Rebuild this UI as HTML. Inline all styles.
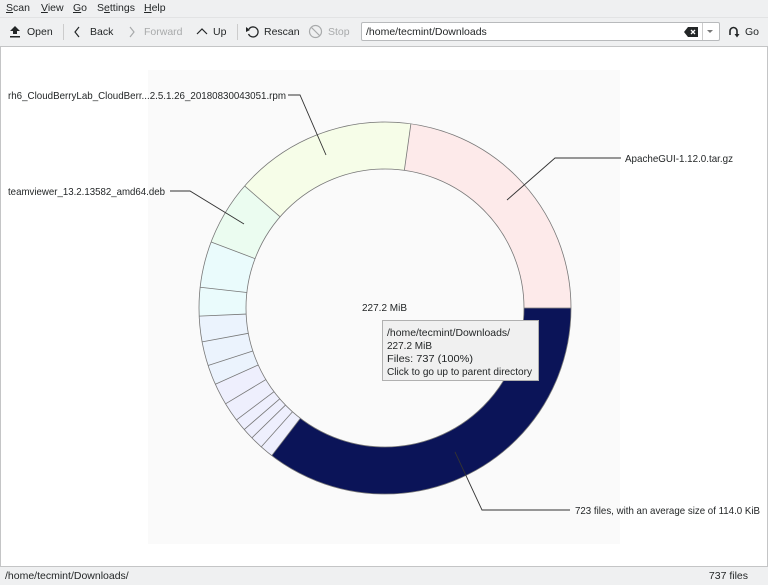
<!DOCTYPE html>
<html><head><meta charset="utf-8"><style>
*{margin:0;padding:0;box-sizing:border-box}
body{width:768px;height:585px;overflow:hidden;background:#eff0f1;font-family:"Liberation Sans","DejaVu Sans",sans-serif;font-size:11px;color:#232627;position:relative}
.menu{position:absolute;top:0;left:0;right:0;height:17px;background:#eff0f1}
.menu span{position:absolute;top:2px;font-size:10.5px}
.tb{position:absolute;top:17px;left:0;right:0;height:28px;background:#eff0f1;border-top:1px solid #e2e3e4}
.tb span{position:absolute;top:8px;font-size:10.5px}
.dis{color:#a8aaab}
.url{position:absolute;left:361px;top:22px;width:359px;height:19px;background:#fff;border:1px solid #b8babc;border-radius:2px}
.main{position:absolute;left:0;top:46px;width:768px;height:521px;background:#fff;border:1px solid #c4c5c6}
.status{position:absolute;top:567px;left:0;right:0;height:18px;background:#eff0f1}
</style></head><body>
<div class="menu"><span style="left:6px"><u>S</u>can</span><span style="left:41px"><u>V</u>iew</span><span style="left:73px"><u>G</u>o</span><span style="left:97px">S<u>e</u>ttings</span><span style="left:144px"><u>H</u>elp</span></div>
<div class="tb">
<svg style="position:absolute;left:9px;top:7px" width="12" height="13"><path d="M6 1 L11 6 H8 V9 H4 V6 H1Z M1 11 H11 V12.5 H1Z" fill="#232627"/></svg>
<span style="left:27px">Open</span>
<div style="position:absolute;left:63px;top:6px;width:1px;height:16px;background:#ccc"></div>
<svg style="position:absolute;left:72px;top:7px" width="10" height="14"><path d="M7 2 L3 7 L7 12" stroke="#232627" fill="none" stroke-width="1.2"/></svg>
<span style="left:90px">Back</span>
<svg style="position:absolute;left:127px;top:7px" width="10" height="14"><path d="M3 2 L7 7 L3 12" stroke="#a8aaab" fill="none" stroke-width="1.2"/></svg>
<span class="dis" style="left:144px">Forward</span>
<svg style="position:absolute;left:195px;top:7px" width="14" height="14"><path d="M2 9 L7 4 L12 9" stroke="#232627" fill="none" stroke-width="1.2"/></svg>
<span style="left:213px">Up</span>
<div style="position:absolute;left:237px;top:6px;width:1px;height:16px;background:#ccc"></div>
<svg style="position:absolute;left:245px;top:6px" width="15" height="15"><path d="M4 5 A5 5 0 1 1 3.5 10" stroke="#232627" fill="none" stroke-width="1.3"/><path d="M1 3 L5 6 L1 8Z" fill="#232627"/></svg>
<span style="left:264px">Rescan</span>
<svg style="position:absolute;left:308px;top:6px" width="15" height="15"><circle cx="7.5" cy="7.5" r="6" stroke="#a8aaab" fill="none" stroke-width="1.2"/><path d="M3.5 3.5 L11.5 11.5" stroke="#a8aaab" stroke-width="1.2"/></svg>
<span class="dis" style="left:328px">Stop</span>
</div>
<div class="url"><span style="position:absolute;left:4px;top:3px;font-size:10.5px">/home/tecmint/Downloads</span>
<svg style="position:absolute;left:322px;top:4px" width="14" height="10"><path d="M4 0 H14 V10 H4 L0 5Z" fill="#232627"/><path d="M7 3 L11 7 M11 3 L7 7" stroke="#fff" stroke-width="1.3"/></svg>
<div style="position:absolute;left:340px;top:0;width:1px;height:17px;background:#ccc"></div>
<svg style="position:absolute;left:345px;top:7px" width="7" height="4"><path d="M0 0 H6 L3 3Z" fill="#777"/></svg>
</div>
<svg style="position:absolute;left:728px;top:25px" width="12" height="14"><path d="M2 10 V6 A3.5 3.5 0 0 1 9 6 V10" stroke="#232627" fill="none" stroke-width="1.6"/><path d="M6.5 9 H11.5 L9 12.5Z" fill="#232627"/></svg>
<span style="position:absolute;left:745px;top:26px;font-size:10.5px">Go</span>
<div class="main"></div>
<svg style="position:absolute;left:0;top:0" width="768" height="585">
<rect x="148" y="70" width="472" height="474" fill="#fafafa"/>
<g fill="none" stroke-width="47">
<circle cx="385" cy="308" r="162.5" stroke="#0b1458" stroke-dasharray="361.6 2000" transform="rotate(0 385 308)"/>
<circle cx="385" cy="308" r="162.5" stroke="#eeeffd" stroke-dasharray="210 2000" transform="rotate(127.5 385 308)"/>
<circle cx="385" cy="308" r="162.5" stroke="#ebf3fd" stroke-dasharray="80 2000" transform="rotate(155.8 385 308)"/>
<circle cx="385" cy="308" r="162.5" stroke="#eafbfc" stroke-dasharray="70 2000" transform="rotate(177.5 385 308)"/>
<circle cx="385" cy="308" r="162.5" stroke="#ebfcf0" stroke-dasharray="57.3 2000" transform="rotate(200.8 385 308)"/>
<circle cx="385" cy="308" r="162.5" stroke="#f6fde8" stroke-dasharray="161.7 2000" transform="rotate(221 385 308)"/>
<circle cx="385" cy="308" r="162.5" stroke="#fdeaea" stroke-dasharray="232.6 2000" transform="rotate(278 385 308)"/>
</g>
<g stroke="#777" stroke-width="0.8" fill="none">
<circle cx="385" cy="308" r="186"/><circle cx="385" cy="308" r="139"/>
<g>
<line x1="524" y1="308" x2="571" y2="308"/>
<line x1="524" y1="308" x2="571" y2="308" transform="rotate(127.5 385 308)"/>
<line x1="524" y1="308" x2="571" y2="308" transform="rotate(131.7 385 308)"/>
<line x1="524" y1="308" x2="571" y2="308" transform="rotate(135.7 385 308)"/>
<line x1="524" y1="308" x2="571" y2="308" transform="rotate(139.2 385 308)"/>
<line x1="524" y1="308" x2="571" y2="308" transform="rotate(143 385 308)"/>
<line x1="524" y1="308" x2="571" y2="308" transform="rotate(149 385 308)"/>
<line x1="524" y1="308" x2="571" y2="308" transform="rotate(155.8 385 308)"/>
<line x1="524" y1="308" x2="571" y2="308" transform="rotate(162 385 308)"/>
<line x1="524" y1="308" x2="571" y2="308" transform="rotate(169.5 385 308)"/>
<line x1="524" y1="308" x2="571" y2="308" transform="rotate(177.5 385 308)"/>
<line x1="524" y1="308" x2="571" y2="308" transform="rotate(186.4 385 308)"/>
<line x1="524" y1="308" x2="571" y2="308" transform="rotate(200.8 385 308)"/>
<line x1="524" y1="308" x2="571" y2="308" transform="rotate(221 385 308)"/>
<line x1="524" y1="308" x2="571" y2="308" transform="rotate(278 385 308)"/>
</g>
</g>
<g stroke="#333" stroke-width="0.9" fill="none">
<polyline points="288,95 300,95 326,155"/>
<polyline points="170,191 190,191 244,224"/>
<polyline points="507,200 555,158 621,158"/>
<polyline points="455,452 482,510 570,510"/>
</g>
<g font-family="Liberation Sans, DejaVu Sans, sans-serif" font-size="10.5" fill="#232627" lengthAdjust="spacingAndGlyphs">
<text x="8" y="99" textLength="278" lengthAdjust="spacingAndGlyphs">rh6_CloudBerryLab_CloudBerr...2.5.1.26_20180830043051.rpm</text>
<text x="8" y="195" textLength="157" lengthAdjust="spacingAndGlyphs">teamviewer_13.2.13582_amd64.deb</text>
<text x="625" y="162" textLength="108" lengthAdjust="spacingAndGlyphs">ApacheGUI-1.12.0.tar.gz</text>
<text x="575" y="514" textLength="185" lengthAdjust="spacingAndGlyphs">723 files, with an average size of 114.0 KiB</text>
<text x="362" y="311" textLength="45" lengthAdjust="spacingAndGlyphs">227.2 MiB</text>
</g>
<rect x="382.5" y="320.5" width="156" height="60" fill="#f0f0f0" stroke="#b0b0b0"/>
<g font-family="Liberation Sans, DejaVu Sans, sans-serif" font-size="10.5" fill="#232627">
<text x="387" y="336" textLength="123" lengthAdjust="spacingAndGlyphs">/home/tecmint/Downloads/</text>
<text x="387" y="349" textLength="45" lengthAdjust="spacingAndGlyphs">227.2 MiB</text>
<text x="387" y="362" textLength="86" lengthAdjust="spacingAndGlyphs">Files: 737 (100%)</text>
<text x="387" y="375" textLength="145" lengthAdjust="spacingAndGlyphs">Click to go up to parent directory</text>
</g>
</svg>
<div class="status"><span style="position:absolute;left:5px;top:3px;font-size:10.5px">/home/tecmint/Downloads/</span><span style="position:absolute;right:20px;top:3px;font-size:10.5px">737 files</span></div>
</body></html>
